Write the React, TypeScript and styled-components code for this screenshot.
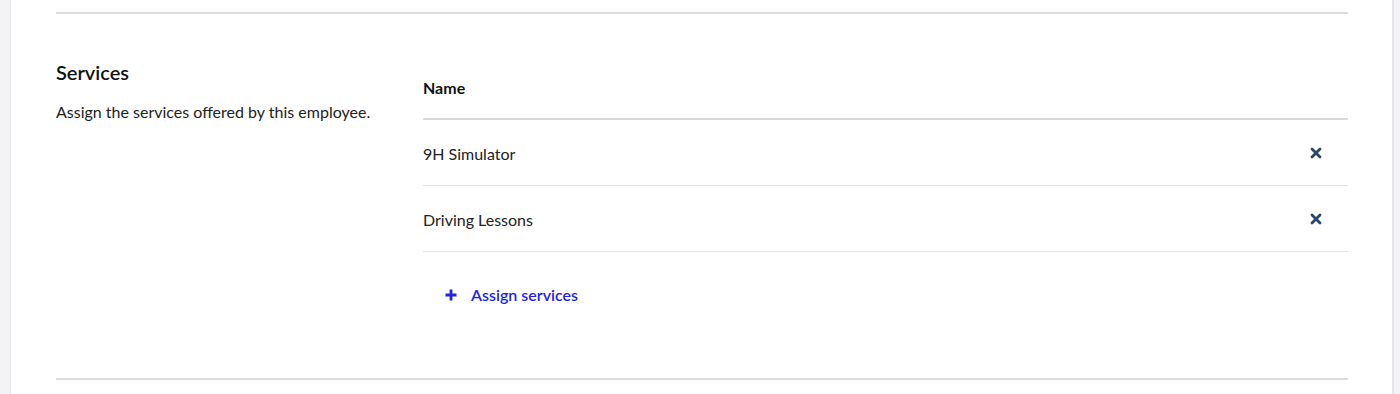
import React from 'react';
import styled, { createGlobalStyle } from 'styled-components';

const services = ['9H Simulator', 'Driving Lessons'];

const App = () => {
  return (
    <>
      <GlobalStyle />
      <Page>
        <Panel>
          <Section>
            <Intro>
              <Heading>Services</Heading>
              <Description>Assign the services offered by this employee.</Description>
            </Intro>
            <TableArea>
              <Table>
                <thead>
                  <tr>
                    <HeadCell>Name</HeadCell>
                    <HeadCell />
                  </tr>
                </thead>
                <tbody>
                  {services.map((name) => (
                    <tr key={name}>
                      <Cell>{name}</Cell>
                      <ActionCell>
                        <RemoveButton aria-label={`Remove ${name}`}>
                          <svg width="12" height="12" viewBox="0 0 12 12">
                            <path
                              d="M2 2 L10 10 M10 2 L2 10"
                              stroke="#28476f"
                              strokeWidth="2.8"
                              strokeLinecap="round"
                            />
                          </svg>
                        </RemoveButton>
                      </ActionCell>
                    </tr>
                  ))}
                </tbody>
              </Table>
              <AssignButton>
                <svg width="12" height="12" viewBox="0 0 12 12">
                  <path d="M6 0.5 V11.5 M0.5 6 H11.5" stroke="#2323e6" strokeWidth="2.8" />
                </svg>
                Assign services
              </AssignButton>
            </TableArea>
          </Section>
        </Panel>
      </Page>
    </>
  );
};

export default App;

const GlobalStyle = createGlobalStyle`
  body {
    margin: 0;
    background: #f3f2f5;
    font-family: Lato, "Open Sans", "Liberation Sans", sans-serif;
    color: #1c1c1c;
  }
`;

const Page = styled.div`
  display: flex;
  height: 394px;
  padding: 0 6px 0 10px;
  overflow: hidden;
`;

const Panel = styled.div`
  flex: 1;
  background: #ffffff;
  border-left: 1px solid #e7e5ea;
  border-right: 2px solid #e7e5ea;
  padding: 12px 44px 0 45px;
`;

const Section = styled.div`
  display: grid;
  grid-template-columns: 367px 1fr;
  border-top: 2px solid #dcdcdc;
  border-bottom: 2px solid #dcdcdc;
  padding: 46px 0 73px;
`;

const Intro = styled.div`
  display: flex;
  flex-direction: column;
`;

const Heading = styled.h2`
  margin: 0;
  font-size: 20px;
  line-height: 24px;
  font-weight: 600;
  color: #111;
`;

const Description = styled.p`
  margin: 18px 0 0;
  font-size: 16px;
  line-height: 20px;
  color: #222;
`;

const TableArea = styled.div`
  display: flex;
  flex-direction: column;
  align-items: flex-start;
`;

const Table = styled.table`
  width: 100%;
  border-collapse: collapse;
  font-size: 16px;
  line-height: 20px;
`;

const HeadCell = styled.th`
  text-align: left;
  font-weight: 700;
  padding: 18px 0 20px;
  border-bottom: 2px solid #dadada;
  color: #111;
`;

const Cell = styled.td`
  padding: 24px 0 21px;
  border-bottom: 1px solid #e4e4e4;
  color: #222;
`;

const ActionCell = styled(Cell)`
  width: 60px;
  padding-right: 25px;
`;

const RemoveButton = styled.button`
  display: flex;
  align-items: center;
  justify-content: center;
  height: 20px;
  width: 14px;
  margin: -2px 0 0 auto;
  border: 0;
  padding: 0;
  background: none;
  cursor: pointer;
`;

const AssignButton = styled.button`
  display: flex;
  align-items: center;
  gap: 14px;
  margin: 33px 0 0 22px;
  padding: 0;
  border: 0;
  background: none;
  font-family: inherit;
  font-size: 16px;
  line-height: 20px;
  font-weight: 600;
  color: #2323e6;
  cursor: pointer;
`;
